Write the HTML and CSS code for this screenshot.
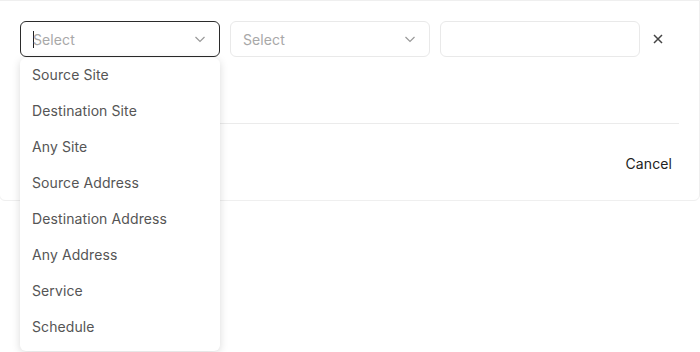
FILE: index.html
```html
<!DOCTYPE html>
<html lang="en">
<head>
    <meta charset="UTF-8">
    <meta name="viewport" content="width=device-width, initial-scale=1.0">
    <title>Filter</title>
    <link rel="stylesheet" href="styles.css">
</head>
<body>
    <div class="panel">
        <!-- Filter Row -->
        <div class="filter-row">
            <div class="select-wrap">
                <div class="select is-open">
                    <span class="caret"></span>
                    <span class="placeholder">Select</span>
                    <svg class="chevron" width="12" height="12" viewBox="0 0 12 12"><path d="M1.5 4l4.5 4.5L10.5 4" fill="none" stroke="currentColor" stroke-width="1.2"/></svg>
                </div>

                <!-- Dropdown -->
                <ul class="dropdown">
                    <li>Source Site</li>
                    <li>Destination Site</li>
                    <li>Any Site</li>
                    <li>Source Address</li>
                    <li>Destination Address</li>
                    <li>Any Address</li>
                    <li>Service</li>
                    <li>Schedule</li>
                </ul>
            </div>

            <div class="select">
                <span class="placeholder">Select</span>
                <svg class="chevron" width="12" height="12" viewBox="0 0 12 12"><path d="M1.5 4l4.5 4.5L10.5 4" fill="none" stroke="currentColor" stroke-width="1.2"/></svg>
            </div>

            <div class="text-input"></div>

            <button class="remove-button">
                <svg width="10" height="10" viewBox="0 0 10 10"><path d="M1 1l8 8M9 1L1 9" fill="none" stroke="currentColor" stroke-width="1.5"/></svg>
            </button>
        </div>

        <!-- Footer -->
        <div class="panel-footer">
            <button class="cancel-button">Cancel</button>
        </div>
    </div>
</body>
</html>
```

FILE: styles.css
```css
/* Reset */
body, html {
    margin: 0;
    padding: 0;
    width: 100%;
    height: 100%;
    overflow: hidden;
    font-family: Inter, "Noto Sans", sans-serif;
    background-color: #fff;
    color: #333;
}

/* Panel */
.panel {
    box-sizing: border-box;
    width: 701px;
    height: 201px;
    margin-left: -1px;
    padding: 20px 20px 0;
    border: 1px solid #efefef;
    border-radius: 0 0 6px 6px;
    background: #fff;
}

/* Filter Row */
.filter-row {
    display: flex;
    align-items: center;
    gap: 10px;
    padding-bottom: 66px;
    border-bottom: 1px solid #ebebeb;
}

.select-wrap {
    position: relative;
}

.select,
.text-input {
    box-sizing: border-box;
    display: flex;
    align-items: center;
    width: 200px;
    height: 36px;
    padding: 0 12px;
    border: 1px solid #e9e9e9;
    border-radius: 6px;
    background: #fff;
}

.select.is-open {
    border-color: #2b2b2b;
}

.placeholder {
    flex: 1;
    font-size: 14px;
    letter-spacing: 0.1px;
    color: #a8a8a8;
}

.caret {
    width: 1px;
    height: 17px;
    margin-right: -1px;
    background: #222;
}

.chevron {
    color: #999;
    margin-right: 1px;
}

.remove-button {
    display: flex;
    align-items: center;
    justify-content: center;
    width: 16px;
    height: 20px;
    padding: 0;
    border: none;
    background: none;
    color: #444;
    cursor: pointer;
}

/* Dropdown */
.dropdown {
    position: absolute;
    top: 37px;
    left: 0;
    width: 200px;
    margin: 0;
    padding: 0 0 5px;
    list-style: none;
    background: #fff;
    border-radius: 6px;
    box-shadow: 0 2px 8px rgba(0, 0, 0, 0.15);
    z-index: 10;
}

.dropdown li {
    height: 36px;
    line-height: 34px;
    padding: 0 12px;
    font-size: 14px;
    letter-spacing: 0.1px;
    color: #555;
}

/* Footer */
.panel-footer {
    display: flex;
    justify-content: flex-end;
    padding-top: 21px;
}

.cancel-button {
    height: 36px;
    padding: 0 7px 0 8px;
    border: none;
    background: none;
    font-family: inherit;
    font-size: 14px;
    font-weight: 400;
    letter-spacing: 0.1px;
    color: #222;
    cursor: pointer;
}
```
